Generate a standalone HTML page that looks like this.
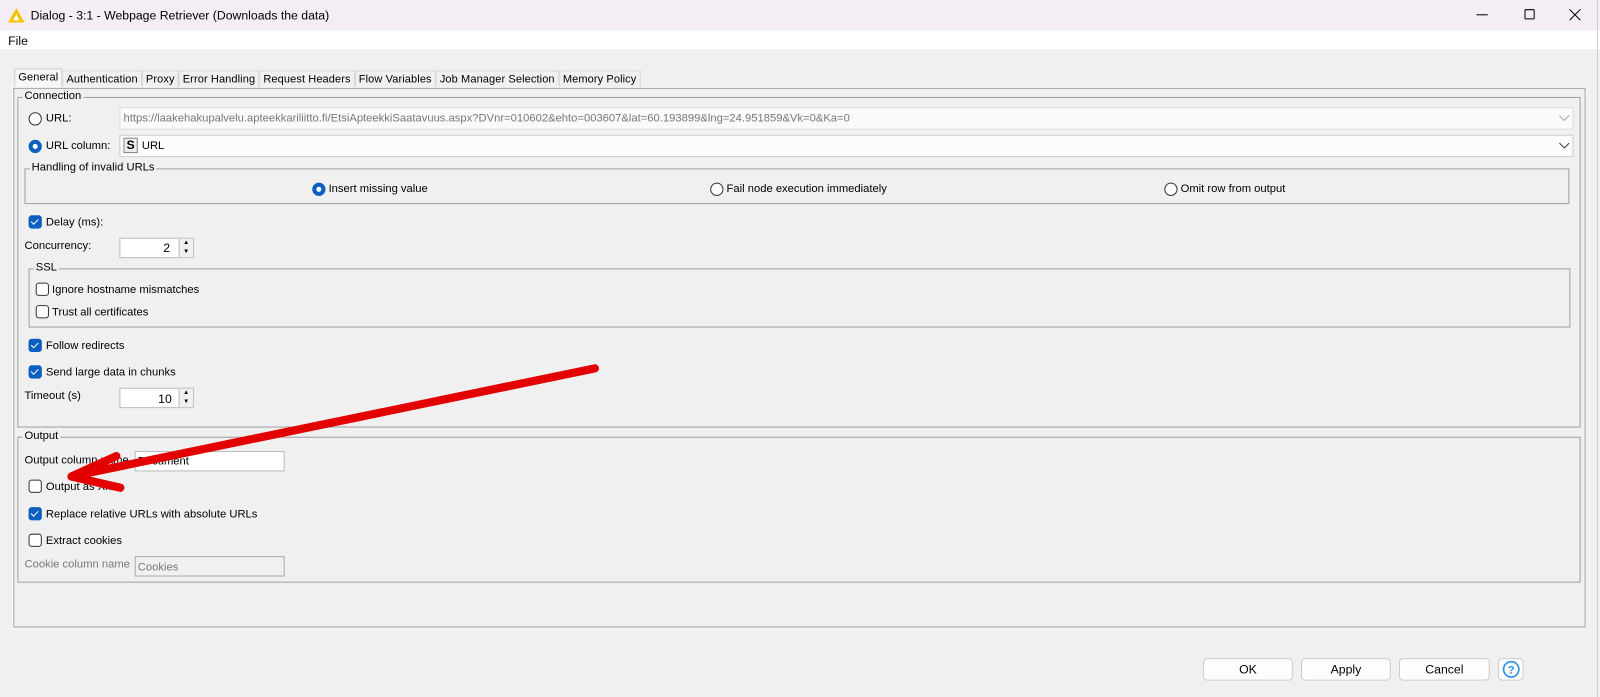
<!DOCTYPE html>
<html><head><meta charset="utf-8"><style>
*{box-sizing:border-box;margin:0;padding:0}
body{width:1600px;height:697px;background:#eee;font-family:"Liberation Sans",sans-serif;font-size:11px;color:#000;position:relative;overflow:hidden}
#w{position:absolute;left:0;top:0;width:1568px;height:683px;transform:scale(1.0204);transform-origin:0 0;background:#f0f0f0}
.a{position:absolute;white-space:nowrap}
.t{position:absolute;white-space:nowrap;margin-top:1px}
.title{left:0;top:0;width:1568px;height:30px;background:#f4edf5}
.menu{left:0;top:30px;width:1568px;height:18px;background:#fff}
.fs{position:absolute;border:1px solid #a0a0a0}
.lg{position:absolute;background:#f0f0f0;padding:0 2px;top:-8px;left:4px}
.cb{position:absolute;width:13px;height:13px;border:1px solid #333;border-radius:3px;background:#fff}
.cb.on{background:#0a5fbf;border-color:#0a5fbf}
.cb.on:after{content:"";position:absolute;left:3px;top:1px;width:3px;height:6px;border:solid #fff;border-width:0 1.3px 1.3px 0;transform:rotate(45deg)}
.rb{position:absolute;width:13px;height:13px;border:1px solid #333;border-radius:50%;background:#fff}
.rb.on{border:4px solid #0a5fbf;background:#fff}
.in{position:absolute;background:#fff;border:1px solid #bbb}
.spin{position:absolute;width:14px;border-left:1px solid #bbb}
.btn{position:absolute;height:22px;border:1px solid #ccc;border-radius:4px;background:#fdfdfd;text-align:center;line-height:20px;font-size:12px}
.tabs{position:absolute;left:14px;top:67px;display:flex;align-items:flex-end}
.tab{height:18px;line-height:17px;border:1px solid #d9d9d9;border-bottom:none;padding:0 3px;background:#f0f0f0;font-size:10.8px;white-space:nowrap;letter-spacing:0.1px}
</style></head><body><div id="w">
<div class="a title"></div>
<svg class="a" style="left:8px;top:8px" width="16" height="14"><polygon points="8,0 16,14 0,14" fill="#f5c400"/><polygon points="8,6 11,12 5,12" fill="#fff"/></svg>
<div class="a" style="left:30px;top:8px;font-size:12px">Dialog - 3:1 - Webpage Retriever (Downloads the data)</div>
<div class="a" style="left:1447px;top:14px;width:11px;height:1px;background:#000"></div>
<div class="a" style="left:1494px;top:9px;width:10px;height:10px;border:1px solid #000;border-radius:1px"></div>
<svg class="a" style="left:1538px;top:9px" width="11" height="11"><path d="M0 0L11 11M11 0L0 11" stroke="#000" stroke-width="1"/></svg>
<div class="a menu"></div>
<div class="a" style="left:8px;top:33px;font-size:12px">File</div>

<div class="tabs">
<div class="tab" style="height:20px;background:#f7f7f7;border-color:#cfcfcf">General</div>
<div class="tab">Authentication</div>
<div class="tab">Proxy</div>
<div class="tab">Error Handling</div>
<div class="tab">Request Headers</div>
<div class="tab">Flow Variables</div>
<div class="tab">Job Manager Selection</div>
<div class="tab">Memory Policy</div>
</div>

<div class="fs" style="left:13px;top:86px;width:1541px;height:529px;border-color:#9a9a9a;outline:1px solid #fafafa"></div>

<div class="fs" style="left:17px;top:95px;width:1532px;height:324px"><div class="lg">Connection</div></div>
<div class="rb" style="left:28px;top:110px"></div><div class="t" style="left:45px;top:109px">URL:</div>
<div class="in" style="left:117px;top:105px;width:1425px;height:22px;border-color:#ddd;background:#fafafa"></div>
<div class="t" style="left:121px;top:109px;color:#777">https://laakehakupalvelu.apteekkariliitto.fi/EtsiApteekkiSaatavuus.aspx?DVnr=010602&amp;ehto=003607&amp;lat=60.193899&amp;lng=24.951859&amp;Vk=0&amp;Ka=0</div>
<svg class="a" style="left:1528px;top:113px" width="10" height="6"><path d="M0 0L5 5L10 0" stroke="#aaa" fill="none"/></svg>
<div class="rb on" style="left:28px;top:137px"></div><div class="t" style="left:45px;top:136px">URL column:</div>
<div class="in" style="left:117px;top:132px;width:1425px;height:22px;border-color:#ccc;background:#fcfcfc"></div>
<div class="a" style="left:121px;top:135px;width:14px;height:15px;border:1px solid #888;background:#eee;font-weight:bold;font-size:12px;text-align:center;line-height:13px">S</div>
<div class="t" style="left:139px;top:136px">URL</div>
<svg class="a" style="left:1528px;top:140px" width="10" height="6"><path d="M0 0L5 5L10 0" stroke="#333" fill="none"/></svg>

<div class="fs" style="left:24px;top:165px;width:1514px;height:35px"><div class="lg" style="left:4px">Handling of invalid URLs</div></div>
<div class="rb on" style="left:306px;top:179px"></div><div class="t" style="left:322px;top:178px">Insert missing value</div>
<div class="rb" style="left:696px;top:179px"></div><div class="t" style="left:712px;top:178px">Fail node execution immediately</div>
<div class="rb" style="left:1141px;top:179px"></div><div class="t" style="left:1157px;top:178px">Omit row from output</div>

<div class="cb on" style="left:28px;top:211px"></div><div class="t" style="left:45px;top:211px">Delay (ms):</div>
<div class="t" style="left:24px;top:234px">Concurrency:</div>
<div class="in" style="left:117px;top:233px;width:73px;height:20px"></div>
<div class="a" style="left:160px;top:236px;font-size:12px">2</div>
<div class="spin" style="left:175px;top:234px;height:18px;background:#f0f0f0"><div style="font-size:6px;text-align:center;line-height:9px">▲<br>▼</div></div>

<div class="fs" style="left:28px;top:263px;width:1511px;height:58px"><div class="lg">SSL</div></div>
<div class="cb" style="left:35px;top:277px"></div><div class="t" style="left:51px;top:277px">Ignore hostname mismatches</div>
<div class="cb" style="left:35px;top:299px"></div><div class="t" style="left:51px;top:299px">Trust all certificates</div>

<div class="cb on" style="left:28px;top:332px"></div><div class="t" style="left:45px;top:332px">Follow redirects</div>
<div class="cb on" style="left:28px;top:358px"></div><div class="t" style="left:45px;top:358px">Send large data in chunks</div>
<div class="t" style="left:24px;top:381px">Timeout (s)</div>
<div class="in" style="left:117px;top:380px;width:73px;height:20px"></div>
<div class="a" style="left:155px;top:384px;font-size:12px">10</div>
<div class="spin" style="left:175px;top:381px;height:18px;background:#f0f0f0"><div style="font-size:6px;text-align:center;line-height:9px">▲<br>▼</div></div>

<div class="fs" style="left:17px;top:428px;width:1532px;height:143px"><div class="lg">Output</div></div>
<div class="t" style="left:24px;top:444px">Output column name</div>
<div class="in" style="left:132px;top:442px;width:147px;height:20px"></div>
<div class="a" style="left:135px;top:446px">Document</div>
<div class="cb" style="left:28px;top:470px"></div><div class="t" style="left:45px;top:470px">Output as XML</div>
<div class="cb on" style="left:28px;top:497px"></div><div class="t" style="left:45px;top:497px">Replace relative URLs with absolute URLs</div>
<div class="cb" style="left:28px;top:523px"></div><div class="t" style="left:45px;top:523px">Extract cookies</div>
<div class="t" style="left:24px;top:546px;color:#777">Cookie column name</div>
<div class="in" style="left:132px;top:545px;width:147px;height:20px;background:#f0f0f0;border-color:#aaa"></div>
<div class="t" style="left:135px;top:549px;color:#777">Cookies</div>

<svg class="a" style="left:0;top:0" width="1568" height="683"><path d="M583 361L74 466" stroke="#e30000" stroke-width="8" stroke-linecap="round"/><path d="M114 447L70 467L118 478" stroke="#e30000" stroke-width="8" fill="none" stroke-linecap="round" stroke-linejoin="round"/></svg>

<div class="btn" style="left:1179px;top:645px;width:88px">OK</div>
<div class="btn" style="left:1275px;top:645px;width:88px">Apply</div>
<div class="btn" style="left:1371px;top:645px;width:89px">Cancel</div>
<div class="btn" style="left:1468px;top:645px;width:25px"><svg width="20" height="20"><circle cx="10" cy="10" r="7.5" stroke="#2b8fe6" stroke-width="1.6" fill="none"/><text x="10" y="14" font-size="11" font-weight="bold" fill="#2b8fe6" text-anchor="middle" font-family="Liberation Sans">?</text></svg></div>
<div class="a" style="left:1565px;top:0;width:1px;height:683px;background:#ccc"></div>
</div></body></html>
